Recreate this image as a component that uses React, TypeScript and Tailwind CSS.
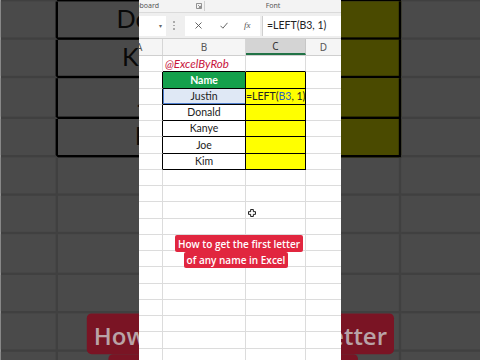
const GRID = "border-[#dcdcdc]";

type Row = { b?: string; kind?: "handle" | "header" | "active" | "name" };

const ROWS: Row[] = [
  { b: "@ExcelByRob", kind: "handle" },
  { b: "Name", kind: "header" },
  { b: "Justin", kind: "active" },
  { b: "Donald", kind: "name" },
  { b: "Kanye", kind: "name" },
  { b: "Joe", kind: "name" },
  { b: "Kim", kind: "name" },
  ...Array.from({ length: 12 }, () => ({})),
];

function CursorIcon() {
  return (
    <svg width="8" height="8" viewBox="0 0 9 9">
      <path
        d="M3 0.5h3v2.5h2.5v3H6v2.5H3V6H0.5V3H3z"
        fill="white"
        stroke="black"
        strokeWidth="1"
      />
    </svg>
  );
}

function Frame({ dim = false }: { dim?: boolean }) {
  const capBox = dim ? "bg-[#7a1424]" : "bg-[#e1263f]";
  return (
    <div className="relative w-[202px] h-[360px] overflow-hidden bg-white font-['Lato',sans-serif] text-[#222]">
      {/* ribbon group labels */}
      <div className="flex h-[12px] items-center bg-[#f3f3f3] text-[7px] text-[#555] font-['Noto_Sans',sans-serif]">
        <div className="flex w-[20px] justify-end whitespace-nowrap">Clipboard</div>
        <div className="ml-[37px] flex h-[6px] w-[6px] items-center justify-center">
          <svg width="6" height="6" viewBox="0 0 6 6">
            <path d="M0.5 0.5h5v5h-5z" fill="none" stroke="#777" strokeWidth="0.8" />
            <path d="M2 2l2.5 2.5M4.5 2.8v1.7H2.8" fill="none" stroke="#777" strokeWidth="0.8" />
          </svg>
        </div>
        <div className="ml-[2px] h-[10px] w-px bg-[#cfcfcf]" />
        <div className="flex-1 text-center">Font</div>
      </div>

      {/* formula bar */}
      <div className="flex h-[26px] items-center border-t border-[#dadada] bg-[#efefef]">
        <div className="flex h-[20px] w-[27px] items-center justify-end bg-white pr-[4px] text-[6px] text-[#666]">
          ▾
        </div>
        <div className="ml-[6px] flex w-[4px] flex-col items-center gap-[2px]">
          <span className="h-[1.5px] w-[1.5px] bg-[#aaa]" />
          <span className="h-[1.5px] w-[1.5px] bg-[#aaa]" />
          <span className="h-[1.5px] w-[1.5px] bg-[#aaa]" />
        </div>
        <div className="ml-[9px] flex h-[20px] w-[75px] items-center bg-white">
          <svg className="ml-[10px]" width="7" height="7" viewBox="0 0 7 7">
            <path d="M0.5 0.5l6 6M6.5 0.5l-6 6" stroke="#555" strokeWidth="0.9" />
          </svg>
          <svg className="ml-[18px]" width="8" height="7" viewBox="0 0 8 7">
            <path d="M0.5 3.8l2.4 2.4L7.5 0.8" fill="none" stroke="#555" strokeWidth="0.9" />
          </svg>
          <span className="ml-[16px] font-['Liberation_Serif',serif] text-[9px] italic text-[#555]">
            fx
          </span>
        </div>
        <div className="ml-[2px] flex h-[20px] flex-1 items-center border-l border-[#cfcfcf] bg-white pl-[4px] text-[10.5px] whitespace-nowrap">
          =LEFT(B3, 1)
        </div>
      </div>

      {/* column headers */}
      <div className="flex h-[18px] border-t border-b border-[#cfcfcf] bg-[#f5f5f5] text-[10px] text-[#555] font-['Noto_Sans',sans-serif]">
        <div className="flex w-[24px] items-center border-r border-[#d6d6d6]">
          <span className="-ml-[3px]">A</span>
        </div>
        <div className="flex w-[83px] items-center justify-center border-r border-[#d6d6d6]">B</div>
        <div className="flex w-[60px] items-center justify-center border-r border-b-2 border-r-[#c6c6c6] border-b-[#217346] bg-[#d4d4d4] text-[#333]">
          C
        </div>
        <div className="flex flex-1 items-center justify-center">D</div>
      </div>

      {/* grid */}
      <div className="flex flex-col text-[10.5px]">
        {ROWS.map((r, i) => {
          const inTable = i >= 1 && i <= 6;
          return (
            <div key={i} className="flex h-[16.25px]">
              <div
                className={`w-[24px] border-b border-r ${GRID} ${
                  inTable ? "border-r-black" : ""
                }`}
              />
              <div
                className={`flex w-[83px] items-center border-b border-r leading-none ${GRID} ${
                  i === 0 ? "border-b-black" : ""
                } ${inTable ? "justify-center border-black" : ""} ${
                  r.kind === "header" ? "bg-[#14a04c] font-bold text-white" : ""
                } ${
                  r.kind === "active"
                    ? "bg-[#dfe8f5] shadow-[inset_1px_0_0_#4f7fd0,inset_0_-1px_0_#4f7fd0]"
                    : ""
                }`}
              >
                {r.kind === "handle" ? (
                  <span className="pl-[2px] text-[11.5px] italic whitespace-nowrap text-[#c8143c]">
                    {r.b}
                  </span>
                ) : (
                  r.b
                )}
              </div>
              <div
                className={`flex w-[60px] items-center border-b border-r leading-none ${GRID} ${
                  i === 0 ? "border-b-black" : ""
                } ${inTable ? "border-black bg-[#ffff00]" : ""}`}
              >
                {r.kind === "active" && (
                  <span className="whitespace-nowrap text-[10.5px]">
                    =LEFT(<span className="text-[#2e62c0]">B3</span>, 1)
                  </span>
                )}
              </div>
              <div className={`flex-1 border-b ${GRID}`} />
            </div>
          );
        })}
      </div>

      {/* cursor */}
      <div className="absolute left-[109px] top-[209px]">
        <CursorIcon />
      </div>

      {/* backdrop dimming, under the caption */}
      {dim && <div className="absolute left-0 top-0 h-[360px] w-[202px] bg-black opacity-[0.71]" />}

      {/* caption */}
      <div
        className={`absolute left-[34px] top-[235px] flex w-[132px] flex-col items-center font-['Open_Sans',sans-serif] text-[10px] font-semibold leading-none ${
          dim ? "text-[#b9a3a7]" : "text-white"
        }`}
      >
        <div className={`rounded-[2px] px-[3px] py-[3.5px] whitespace-nowrap ${capBox}`}>
          How to get the first letter
        </div>
        <div className={`-ml-[6px] rounded-[2px] px-[3px] py-[3px] whitespace-nowrap ${capBox}`}>
          of any name in Excel
        </div>
      </div>
    </div>
  );
}

export default function App() {
  return (
    <div className="relative h-[360px] w-[480px] overflow-hidden bg-[#4a4a4a]">
      {/* enlarged, dimmed backdrop */}
      <div
        aria-hidden
        className="absolute left-[139px] top-0 origin-[99px_179px] scale-[2.4]"
      >
        <Frame dim />
      </div>
      <div className="relative mx-auto w-[202px]">
        <Frame />
      </div>
    </div>
  );
}
